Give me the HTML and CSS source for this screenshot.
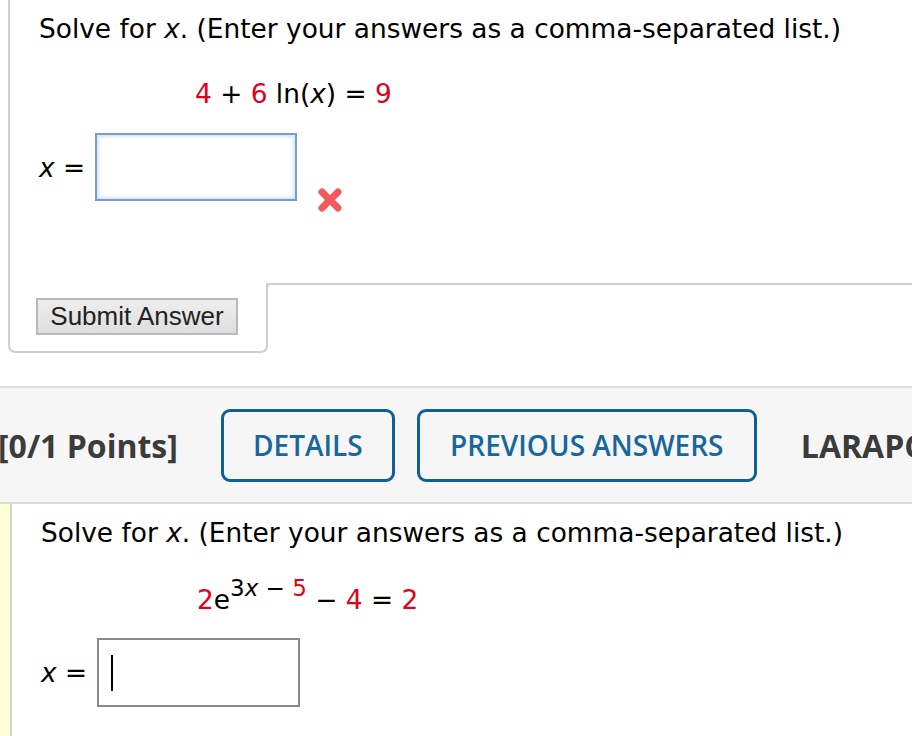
FILE: index.html
```html
<!DOCTYPE html>
<html>
<head>
<meta charset="utf-8">
<link rel="stylesheet" href="styles.css">
</head>
<body>
<div class="panel">
  <div class="panel-body">
    <p class="prompt">Solve for <i>x</i>. (Enter your answers as a comma-separated list.)</p>
    <p class="eq"><span class="red">4</span> + <span class="red">6</span> ln(<i>x</i>) = <span class="red">9</span></p>
    <div class="answer-row">
      <span class="lbl"><i>x</i> =</span>
      <span class="input input-blue"></span>
      <svg class="wrong" width="26" height="26" viewBox="0 0 26 26"><path d="M5 5 L21 21 M21 5 L5 21" stroke="#f25a60" stroke-width="7" stroke-linecap="round" fill="none"/></svg>
    </div>
  </div>
  <div class="panel-foot">
    <div class="submit-tab"><button class="submit">Submit Answer</button></div>
    <div class="foot-rest"></div>
  </div>
</div>

<div class="bar">
  <span class="points">[0/1 Points]</span>
  <button class="tb tb-details">DETAILS</button>
  <button class="tb tb-prev">PREVIOUS ANSWERS</button>
  <span class="code">LARAPCALC10 4.4.045.</span>
</div>

<div class="q2">
  <div class="strip"></div>
  <div class="q2-body">
    <p class="prompt">Solve for <i>x</i>. (Enter your answers as a comma-separated list.)</p>
    <p class="eq eq2"><span class="red">2</span>e<sup class="sup">3<i>x</i> − <span class="red">5</span></sup> − <span class="red">4</span> = <span class="red">2</span></p>
    <div class="answer-row answer-row2">
      <span class="lbl"><i>x</i> =</span>
      <span class="input input-grey"><span class="caret"></span></span>
    </div>
  </div>
</div>
</body>
</html>
```

FILE: styles.css
```css
html, body {
  margin: 0;
  padding: 0;
  background: #ffffff;
  overflow: hidden;
  width: 912px;
  height: 736px;
}
body {
  font-family: "DejaVu Sans", Verdana, sans-serif;
  font-size: 26.4px;
  color: #000;
}
p { margin: 0; }
.red { color: #e2001a; }

.panel { margin-left: 8px; }
.panel-body {
  border-left: 2px solid #cfcfcf;
  height: 283px;
  box-sizing: border-box;
  padding: 14px 0 0 29px;
}
.prompt {
  line-height: 30px;
  white-space: nowrap;
}
.eq {
  line-height: 30px;
  margin-top: 35px;
  padding-left: 156px;
  white-space: nowrap;
}
.answer-row {
  display: flex;
  align-items: flex-start;
  margin-top: 24px;
}
.lbl {
  line-height: 30px;
  margin-top: 20px;
  width: 56px;
  white-space: nowrap;
}
.input {
  display: block;
  width: 202px;
  height: 68px;
  box-sizing: border-box;
  background: #fff;
  flex-shrink: 0;
}
.input-blue {
  border: 2px solid #7b9ec8;
  box-shadow: inset 0 0 3px 2px #d4e6fa;
}
.wrong {
  margin-top: 54px;
  margin-left: 20px;
  filter: blur(0.6px);
}

.panel-foot {
  display: flex;
}
.submit-tab {
  width: 260px;
  box-sizing: border-box;
  border: 2px solid #cfcfcf;
  border-top: none;
  border-radius: 0 0 7px 7px;
  padding: 15px 0 16px 26px;
}
.submit {
  display: block;
  height: 37px;
  width: 202px;
  box-sizing: border-box;
  border: 2px solid #b9b9b9;
  background: linear-gradient(#eeeeee, #dedede);
  font-family: "Liberation Sans", Arial, sans-serif;
  font-size: 26px;
  color: #222;
  padding: 0;
  line-height: 31px;
}
.foot-rest {
  flex: 1;
  height: 20px;
  border-top: 2px solid #cfcfcf;
  border-left: 2px solid #cfcfcf;
  border-top-left-radius: 5px;
  margin-left: -2px;
}

.bar {
  margin-top: 33px;
  height: 118px;
  box-sizing: border-box;
  background: #f6f6f6;
  border-top: 2px solid #dddddd;
  border-bottom: 2px solid #dddddd;
  display: flex;
  align-items: center;
  white-space: nowrap;
  overflow: hidden;
  font-family: "Open Sans", sans-serif;
}
.bar > * { flex-shrink: 0; }
.points, .code {
  font-weight: 700;
  font-size: 32px;
  color: #3b3b3b;
}
.points { margin-left: -2px; }
.tb {
  height: 73px;
  box-sizing: border-box;
  border: 3px solid #0f6096;
  border-radius: 9px;
  background: transparent;
  font-family: "Open Sans", sans-serif;
  font-weight: 600;
  font-size: 28px;
  color: #17679d;
  padding: 0;
}
.tb-details { width: 174px; margin-left: 43px; }
.tb-prev { width: 340px; margin-left: 22px; }
.code { margin-left: 44px; }

.q2 {
  display: flex;
  height: 232px;
}
.strip {
  width: 10px;
  background: #fefed5;
  flex-shrink: 0;
}
.q2-body {
  flex: 1;
  border-left: 2px solid #d3d3d3;
  padding: 14px 0 0 29px;
}
.eq2 {
  margin-top: 37px;
}
.sup {
  font-size: 23px;
  vertical-align: 13px;
  line-height: 0;
}
.answer-row2 {
  margin-top: 23px;
}
.input-grey {
  border: 2px solid #8a8a8a;
  width: 203px;
  height: 69px;
  position: relative;
}
.caret {
  position: absolute;
  left: 12px;
  top: 15px;
  width: 2px;
  height: 36px;
  background: #000;
}
```
